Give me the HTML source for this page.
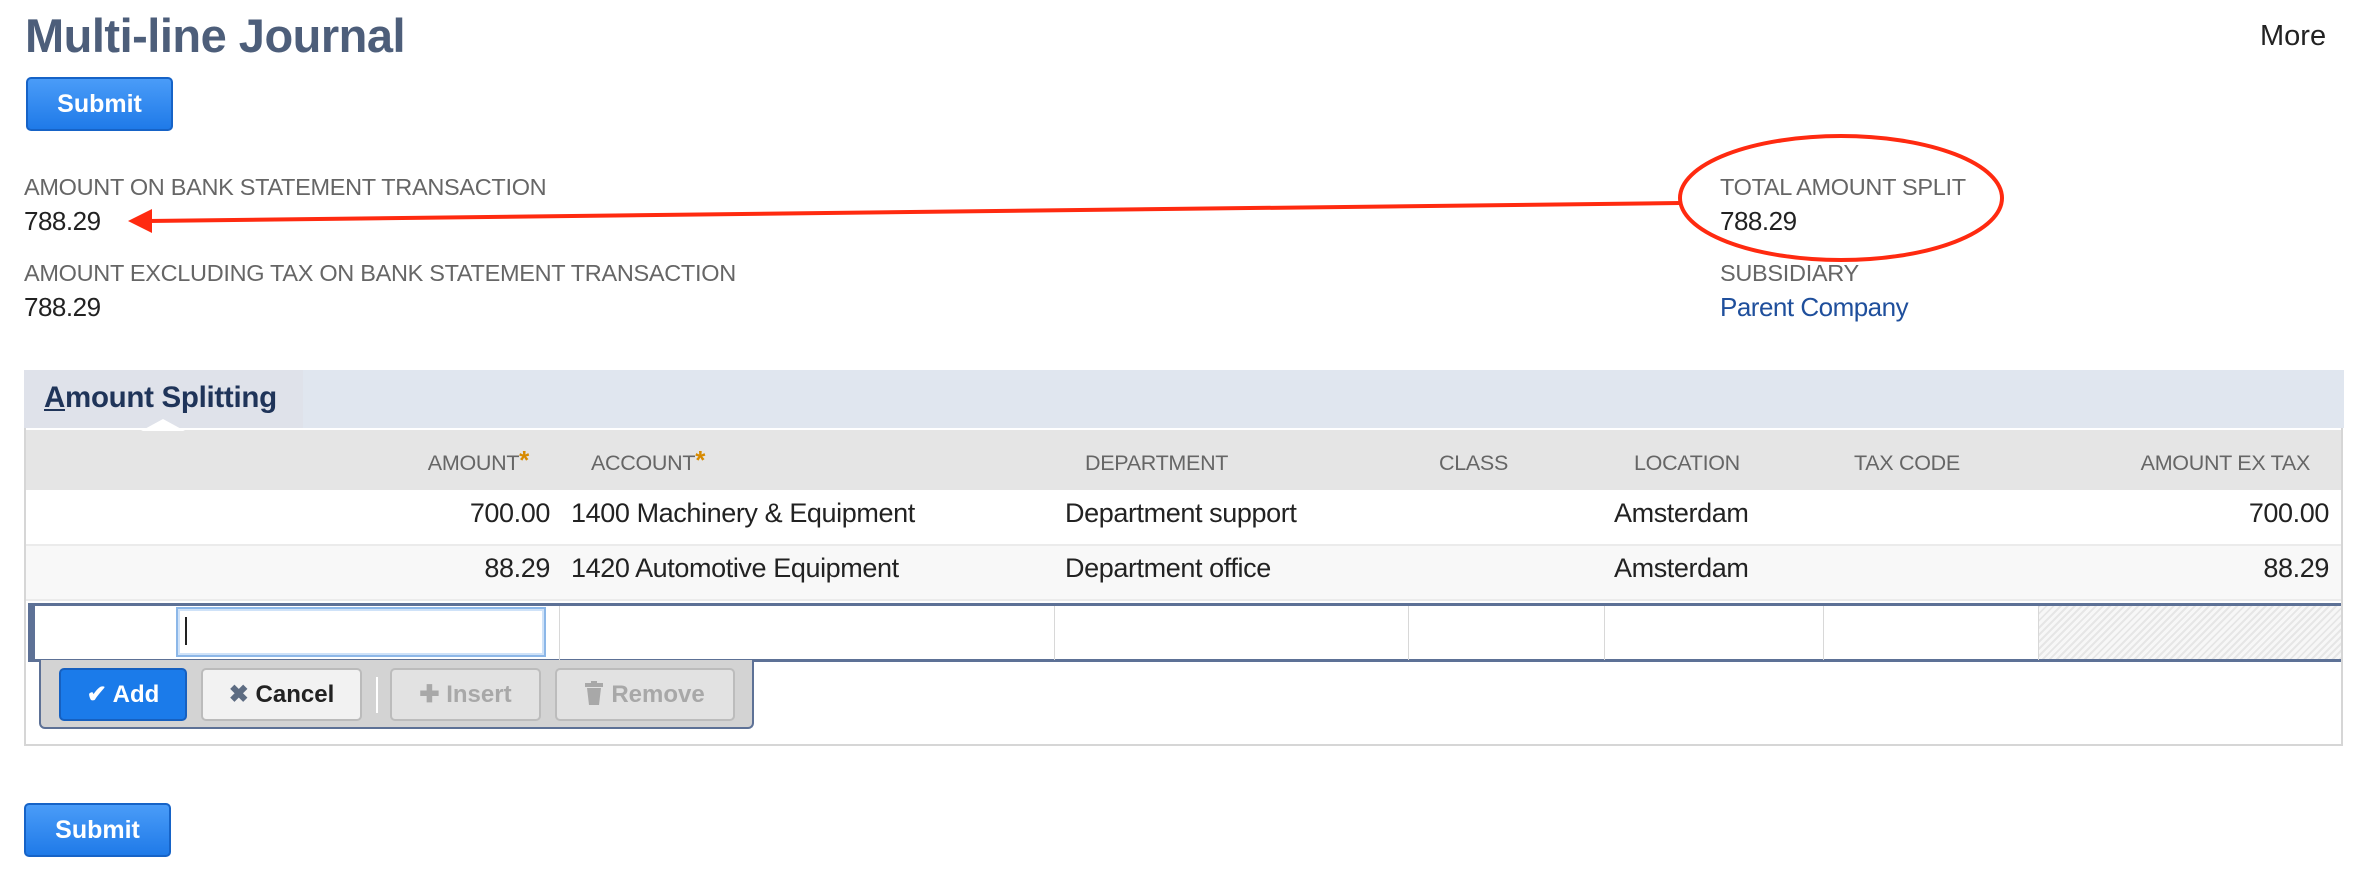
<!DOCTYPE html>
<html><head><meta charset="utf-8"><style>
*{margin:0;padding:0;box-sizing:border-box}
body{width:2370px;height:894px;background:#fff;position:relative;overflow:hidden;font-family:"Liberation Sans",Arial,sans-serif;color:#222}
.a{position:absolute;white-space:nowrap}
.lbl{font-size:23.5px;color:#666;letter-spacing:-0.3px}
.val{font-size:26px;color:#222;letter-spacing:-0.5px}
.btn{position:absolute;background:linear-gradient(#4a9cf8,#1f7ae8);border:2px solid #1663c7;border-radius:5px;color:#fff;font-weight:bold;font-size:25px;text-align:center}
.th{font-size:21.5px;color:#666;top:450px;letter-spacing:-0.3px;line-height:26px}
.td{font-size:27px;color:#222;letter-spacing:-0.4px}
.star{color:#d78a00;font-weight:bold;font-size:26px;vertical-align:top;line-height:20px}
.vd{position:absolute;top:606px;height:54px;width:1px;background:#d8d8d8}
.bb{position:absolute;top:668px;height:53px;border-radius:5px;font-size:24px;font-weight:bold;text-align:center;line-height:49px}
</style></head><body>
<div class="a" style="left:25px;top:8px;font-size:47px;font-weight:bold;color:#4d5e7a;letter-spacing:-0.5px">Multi-line Journal</div>
<div class="a" style="left:2260px;top:20px;font-size:29px;color:#222">More</div>
<div class="btn" style="left:26px;top:77px;width:147px;height:54px;line-height:50px">Submit</div>

<div class="a lbl" style="left:24px;top:174px">AMOUNT ON BANK STATEMENT TRANSACTION</div>
<div class="a val" style="left:24px;top:206px">788.29</div>
<div class="a lbl" style="left:24px;top:260px">AMOUNT EXCLUDING TAX ON BANK STATEMENT TRANSACTION</div>
<div class="a val" style="left:24px;top:292px">788.29</div>
<div class="a lbl" style="left:1720px;top:174px">TOTAL AMOUNT SPLIT</div>
<div class="a val" style="left:1720px;top:206px">788.29</div>
<div class="a lbl" style="left:1720px;top:260px">SUBSIDIARY</div>
<div class="a val" style="left:1720px;top:292px;color:#1f4f9c">Parent Company</div>

<svg class="a" style="left:0;top:0" width="2370" height="300">
<line x1="148" y1="221" x2="1680" y2="203" stroke="#ff2a10" stroke-width="4"/>
<polygon points="128,221 152,209 152,233" fill="#ff2a10"/>
<ellipse cx="1841" cy="198" rx="161" ry="62" fill="none" stroke="#ff2a10" stroke-width="4"/>
</svg>

<div class="a" style="left:24px;top:370px;width:2320px;height:58px;background:#e0e6ef"></div>
<div class="a" style="left:24px;top:370px;width:279px;height:58px;background:#dfe2ea"></div>
<div class="a" style="left:44px;top:381px;font-size:29.5px;font-weight:bold;color:#1f3459;letter-spacing:-0.3px"><u>A</u>mount Splitting</div>
<div class="a" style="left:24px;top:428px;width:2319px;height:318px;border:2px solid #d6d6d6;border-top:none;background:#fff"></div>
<div class="a" style="left:26px;top:430px;width:2315px;height:60px;background:#e5e5e5"></div>
<svg class="a" style="left:141px;top:419px" width="44" height="12"><polygon points="0,12 22,0 44,12" fill="#fff"/></svg>
<div class="a" style="left:26px;top:544px;width:2315px;height:2px;background:#ebebeb"></div>
<div class="a" style="left:26px;top:546px;width:2315px;height:54px;background:#f8f8f8"></div>
<div class="a" style="left:26px;top:599px;width:2315px;height:2px;background:#ebebeb"></div>

<div class="a th" style="right:1841px">AMOUNT<span class="star">*</span></div>
<div class="a th" style="left:591px">ACCOUNT<span class="star">*</span></div>
<div class="a th" style="left:1085px">DEPARTMENT</div>
<div class="a th" style="left:1439px">CLASS</div>
<div class="a th" style="left:1634px">LOCATION</div>
<div class="a th" style="left:1854px">TAX CODE</div>
<div class="a th" style="right:60px">AMOUNT EX TAX</div>

<div class="a td" style="right:1820px;top:498px">700.00</div>
<div class="a td" style="left:571px;top:498px">1400 Machinery &amp; Equipment</div>
<div class="a td" style="left:1065px;top:498px">Department support</div>
<div class="a td" style="left:1614px;top:498px">Amsterdam</div>
<div class="a td" style="right:41px;top:498px">700.00</div>
<div class="a td" style="right:1820px;top:553px">88.29</div>
<div class="a td" style="left:571px;top:553px">1420 Automotive Equipment</div>
<div class="a td" style="left:1065px;top:553px">Department office</div>
<div class="a td" style="left:1614px;top:553px">Amsterdam</div>
<div class="a td" style="right:41px;top:553px">88.29</div>

<div class="a" style="left:28px;top:603px;width:2313px;height:3px;background:#5d7196"></div>
<div class="a" style="left:28px;top:659px;width:2313px;height:3px;background:#5d7196"></div>
<div class="a" style="left:28px;top:603px;width:7px;height:58px;background:#5d7196"></div>
<div class="a" style="left:2038px;top:606px;width:303px;height:53px;background:repeating-linear-gradient(135deg,#e6e6e6 0 2px,#f7f7f7 2px 5px)"></div>
<div class="vd" style="left:559px"></div><div class="vd" style="left:1054px"></div><div class="vd" style="left:1408px"></div><div class="vd" style="left:1604px"></div><div class="vd" style="left:1823px"></div><div class="vd" style="left:2038px"></div>
<div class="a" style="left:176px;top:607px;width:370px;height:50px;border:2px solid #8cb7e8;box-shadow:0 0 0 2px #cfe2f8 inset;background:#fff"></div>
<div class="a" style="left:185px;top:617px;width:2px;height:28px;background:#222"></div>

<div class="a" style="left:39px;top:660px;width:715px;height:69px;background:#d3d3d3;border:2px solid #5d7196;border-top:none;border-radius:0 0 6px 6px"></div>
<div class="bb" style="left:59px;width:128px;background:#1b7bea;border:2px solid #1660c0;color:#fff">✔ Add</div>
<div class="bb" style="left:201px;width:161px;background:#f2f2f2;border:2px solid #bbb;color:#222"><span style="color:#5d6c82">✖</span> Cancel</div>
<div class="a" style="left:376px;top:677px;width:2px;height:36px;background:#fff"></div>
<div class="bb" style="left:390px;width:151px;background:#e2e2e2;border:2px solid #bcbcbc;color:#a8a8a8">✚ Insert</div>
<div class="bb" style="left:555px;width:180px;background:#e2e2e2;border:2px solid #bcbcbc;color:#a8a8a8"><svg width="18" height="24" style="vertical-align:-3px;margin-right:8px"><rect x="0" y="2" width="18" height="4" fill="#a8a8a8"/><rect x="6" y="0" width="6" height="3" fill="#a8a8a8"/><path d="M2 7h14l-2 17H4z" fill="#a8a8a8"/></svg>Remove</div>

<div class="btn" style="left:24px;top:803px;width:147px;height:54px;line-height:50px">Submit</div>
</body></html>
